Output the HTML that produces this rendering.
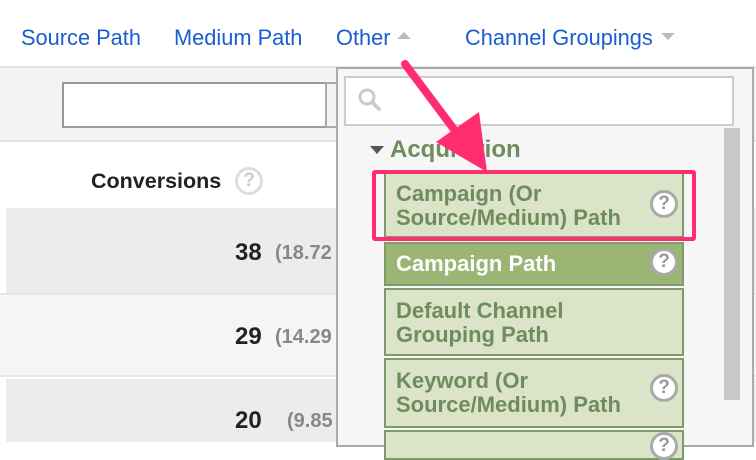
<!DOCTYPE html><html><head><style>
*{margin:0;padding:0;box-sizing:border-box}
body{width:756px;height:442px;overflow:hidden;position:relative;background:#fff;font-family:"Liberation Sans",Arial,sans-serif}
.a{position:absolute}
.nav{font-size:21.8px;color:#1a5dce;top:25px}
.item{position:absolute;left:384px;width:300px;border:2px solid #7f9b6c;background:#dbe3c8;color:#6f8c5d;font-weight:bold;font-size:22px;line-height:24px;padding:0 0 0 10px;white-space:nowrap}
.q{position:absolute;width:28px;height:28px;border-radius:50%;border:3px solid #aaa;background:#fff;color:#999;font-size:19px;font-weight:bold;text-align:center;line-height:22px}
.num{font-weight:bold;font-size:24px;color:#222}
.pct{font-weight:bold;font-size:20px;color:#888}
</style></head><body>
<div class="a nav" style="left:21px">Source Path</div>
<div class="a nav" style="left:174px">Medium Path</div>
<div class="a nav" style="left:336px">Other</div>
<div class="a" style="left:397px;top:32px;width:0;height:0;border-left:7px solid transparent;border-right:7px solid transparent;border-bottom:7px solid #bbb"></div>
<div class="a nav" style="left:465px">Channel Groupings</div>
<div class="a" style="left:661px;top:33px;width:0;height:0;border-left:7px solid transparent;border-right:7px solid transparent;border-top:7px solid #bbb"></div>

<div class="a" style="left:0;top:66px;width:756px;height:76px;background:#f3f3f3;border-top:2px solid #e3e3e3;border-bottom:2px solid #e3e3e3"></div>
<div class="a" style="left:62px;top:82px;width:265px;height:46px;background:#fff;border:2px solid #999"></div>
<div class="a" style="left:325px;top:82px;width:20px;height:46px;border:2px solid #aaa;background:#f3f3f3"></div>

<div class="a" style="left:91px;top:169px;font-weight:bold;font-size:21.5px;color:#222">Conversions</div>
<div class="q" style="left:235px;top:167px;border-color:#ddd;color:#ccc">?</div>

<div class="a" style="left:6px;top:208px;width:750px;height:85px;background:#ececec"></div>
<div class="a" style="left:0;top:293px;width:756px;height:84px;background:#f5f5f5;border-top:2px solid #e6e6e6;border-bottom:2px solid #e6e6e6"></div>
<div class="a" style="left:6px;top:379px;width:750px;height:63px;background:#ececec"></div>
<div class="a num" style="left:235px;top:239px">38</div><div class="a pct" style="left:275px;top:242px">(18.72</div>
<div class="a num" style="left:235px;top:323px">29</div><div class="a pct" style="left:275px;top:326px">(14.29</div>
<div class="a num" style="left:235px;top:407px">20</div><div class="a pct" style="left:287px;top:410px">(9.85</div>

<div class="a" style="left:336px;top:67px;width:418px;height:380px;background:#f6f6f6;border:2px solid #aaa"></div>
<div class="a" style="left:344px;top:76px;width:390px;height:50px;background:#fff;border:2px solid #ccc"></div>
<svg class="a" style="left:356px;top:86px" width="30" height="30"><circle cx="11" cy="11" r="7" fill="none" stroke="#ccc" stroke-width="3"/><line x1="16" y1="16" x2="23" y2="23" stroke="#ccc" stroke-width="4" stroke-linecap="round"/></svg>
<div class="a" style="left:724px;top:128px;width:16px;height:272px;background:#c8c8c8"></div>

<div class="a" style="left:370px;top:146px;width:0;height:0;border-left:7px solid transparent;border-right:7px solid transparent;border-top:8px solid #555"></div>
<div class="a" style="left:390px;top:136px;font-weight:bold;font-size:24px;color:#6f8c5d">Acquisition</div>

<div class="item" style="top:172px;height:66px;padding-top:8px">Campaign (Or<br>Source/Medium) Path</div>
<div class="q" style="left:650px;top:190px">?</div>
<div class="item" style="top:242px;height:44px;background:#9bb574;color:#fff;padding-top:8px">Campaign Path</div>
<div class="q" style="left:650px;top:248px">?</div>
<div class="item" style="top:288px;height:68px;padding-top:9px">Default Channel<br>Grouping Path</div>
<div class="item" style="top:358px;height:70px;padding-top:9px">Keyword (Or<br>Source/Medium) Path</div>
<div class="q" style="left:650px;top:374px">?</div>
<div class="item" style="top:430px;height:30px"></div>
<div class="q" style="left:650px;top:432px">?</div>

<div class="a" style="left:372px;top:170px;width:324px;height:71px;border:4px solid #ff2d6f;border-radius:3px"></div>
<svg class="a" style="left:0;top:0" width="756" height="442"><line x1="405" y1="64" x2="462" y2="140" stroke="#ff2d6f" stroke-width="8" stroke-linecap="round"/><polygon points="436,142 487,172 479,112" fill="#ff2d6f"/></svg>
</body></html>
